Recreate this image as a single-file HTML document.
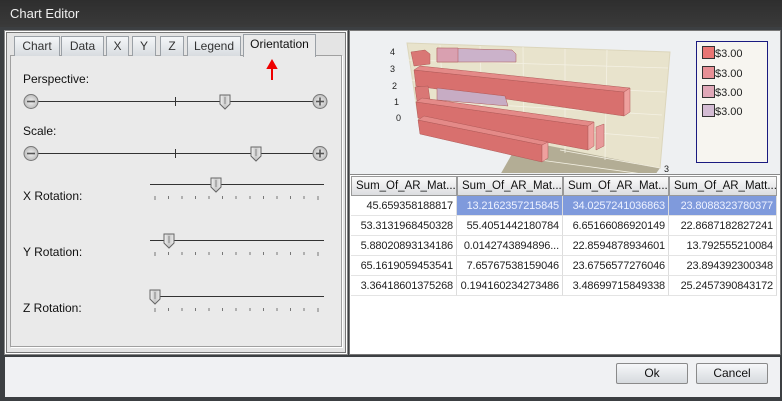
<!DOCTYPE html>
<html><head><meta charset="utf-8"><style>
*{margin:0;padding:0;box-sizing:border-box}
body{width:782px;height:401px;background:#3c3f42;font-family:"Liberation Sans",sans-serif;font-size:11px;color:#111;position:relative;overflow:hidden}
.a{position:absolute}
.title{left:0;top:0;width:782px;height:27px;background:linear-gradient(#2e2e2e,#3a3a3a);color:#f0f0f0;font-size:13px;padding:6px 10px}
.lp{left:4px;top:30px;width:344px;height:325px;background:#e4e4e4;border:1px solid #888;box-shadow:inset 0 0 0 1px #fff,inset 0 0 0 2px #777}
.tab{top:36px;height:20px;background:linear-gradient(#f4f6f8,#d8dce0);border:1px solid #9aa0a6;border-bottom:none;text-align:center;line-height:19px;font-size:12px;color:#333}
.panel{left:10px;top:55px;width:332px;height:292px;background:#eaeaea;border:1px solid #a0a0a0;box-shadow:1px 1px 0 #fff}
.lbl{font-size:12px;color:#111}
.rp{left:349px;top:30px;width:432px;height:325px;background:#eef0f2;border:1px solid #777}
.grid{left:350px;top:174px;width:430px;height:180px;background:#fff;border-top:1px solid #888}
.hd{top:176px;height:20px;background:linear-gradient(#fafafa,#dcdde0);border:1px solid #999;font-size:11.5px;line-height:18px;padding-left:4px;color:#111;white-space:nowrap;overflow:hidden}
.c{height:20px;font-size:11px;letter-spacing:-0.15px;line-height:20px;text-align:right;padding-right:3px;border-right:1px solid #ddd;border-bottom:1px solid #e4e4e4;color:#222;white-space:nowrap;overflow:hidden}
.s{background:#7f9adc;color:#eef2ff}
.bot{left:5px;top:357px;width:775px;height:40px;background:#f0f1f3}
.btn{top:363px;height:21px;border:1px solid #8a8a8a;border-radius:2px;background:linear-gradient(#f6f7f9,#d6dade);text-align:center;line-height:19px;font-size:12px}
</style></head><body>
<div class="a title">Chart Editor</div>
<div class="a lp"></div>
<div class="a panel"></div>
<div class="a tab" style="left:14px;width:46px">Chart</div>
<div class="a tab" style="left:61px;width:43px">Data</div>
<div class="a tab" style="left:106px;width:23px">X</div>
<div class="a tab" style="left:132px;width:24px">Y</div>
<div class="a tab" style="left:160px;width:24px">Z</div>
<div class="a tab" style="left:187px;width:54px">Legend</div>
<div class="a tab" style="left:243px;top:34px;width:73px;height:23px;background:#eaeaea;color:#111">Orientation</div>
<div class="a lbl" style="left:23px;top:72px">Perspective:</div>
<div class="a lbl" style="left:23px;top:124px">Scale:</div>
<div class="a lbl" style="left:23px;top:189px">X Rotation:</div>
<div class="a lbl" style="left:23px;top:245px">Y Rotation:</div>
<div class="a lbl" style="left:23px;top:301px">Z Rotation:</div>
<svg class="a" style="left:0;top:0" width="350" height="360">
<defs><linearGradient id="th" x1="0" x2="1"><stop offset="0" stop-color="#f4f4f4"/><stop offset=".5" stop-color="#c8c8c8"/><stop offset="1" stop-color="#eee"/></linearGradient>
<radialGradient id="ci"><stop offset="0" stop-color="#f2f2f2"/><stop offset="1" stop-color="#bdbdbd"/></radialGradient>
<g id="thumb"><path d="M-5,-6h10v9l-5,5l-5,-5z" fill="url(#th)" stroke="#666"/><line x1="0" y1="-4" x2="0" y2="3" stroke="#888"/></g>
<g id="mi"><circle r="7" fill="url(#ci)" stroke="#777"/><line x1="-4" x2="4" stroke="#555" stroke-width="1.6"/></g>
<g id="pl"><circle r="7" fill="url(#ci)" stroke="#777"/><line x1="-4" x2="4" stroke="#555" stroke-width="1.6"/><line y1="-4" y2="4" stroke="#555" stroke-width="1.6"/></g>
<g id="tk" stroke="#777"><line x1="155" x2="155" y1="0" y2="4"/><line x1="168.5" x2="168.5" y1="0" y2="3"/><line x1="182" x2="182" y1="0" y2="3"/><line x1="195.5" x2="195.5" y1="0" y2="3"/><line x1="209" x2="209" y1="0" y2="3"/><line x1="222.5" x2="222.5" y1="0" y2="3"/><line x1="236" x2="236" y1="0" y2="3"/><line x1="250" x2="250" y1="0" y2="3"/><line x1="263.5" x2="263.5" y1="0" y2="3"/><line x1="277" x2="277" y1="0" y2="3"/><line x1="290.5" x2="290.5" y1="0" y2="3"/><line x1="304" x2="304" y1="0" y2="3"/><line x1="318" x2="318" y1="0" y2="4"/></g></defs>
<line x1="37" x2="314" y1="101.5" y2="101.5" stroke="#333"/><line x1="175.5" x2="175.5" y1="97" y2="106" stroke="#333"/>
<use href="#mi" x="31" y="101.5"/><use href="#pl" x="320" y="101.5"/><use href="#thumb" x="225" y="101"/>
<line x1="37" x2="314" y1="153.5" y2="153.5" stroke="#333"/><line x1="175.5" x2="175.5" y1="149" y2="158" stroke="#333"/>
<use href="#mi" x="31" y="153.5"/><use href="#pl" x="320" y="153.5"/><use href="#thumb" x="256" y="153"/>
<line x1="150" x2="324" y1="184.5" y2="184.5" stroke="#333"/><use href="#tk" y="196"/><use href="#thumb" x="216" y="184"/>
<line x1="150" x2="324" y1="240.5" y2="240.5" stroke="#333"/><use href="#tk" y="252"/><use href="#thumb" x="169" y="240"/>
<line x1="150" x2="324" y1="296.5" y2="296.5" stroke="#333"/><use href="#tk" y="308"/><use href="#thumb" x="155" y="296"/>
<path d="M272,80v-14M272,61l-4,7h8z" stroke="#e00" stroke-width="2" fill="#e00"/>
</svg>
<div class="a rp"></div>
<svg class="a" style="left:350px;top:31px" width="430" height="142" viewBox="350 31 430 142">
<polygon points="407,43 670,52 660,168 420,130" fill="#e8e3cc" stroke="#dcd6bc"/>
<polygon points="520,140 660,168 655,175 500,175" fill="#b3ad95"/>
<g stroke="#f4f1e4" stroke-width=".8" fill="none"><path d="M440,45L445,135M480,46L483,140M523,47L524,147M565,49L565,153M607,50L605,160M407,60L668,68M410,80L665,92M414,100L662,115M417,118L659,138M560,150L660,168M540,160L650,175"/></g>
<g stroke="#b05a58" stroke-width=".5">
<polygon points="411,52 425,50 430,54 430,64 414,66" fill="#d97775"/>
<polygon points="437,48 512,50 516,54 516,62 437,62" fill="#cbb2ca"/>
<polygon points="437,48 458,48 458,62 437,62" fill="#d9a0b0"/>
<polygon points="414,70 624,92 624,116 416,86" fill="#d8706e"/>
<polygon points="414,70 420,66 630,88 624,92" fill="#e48a88"/>
<polygon points="624,92 630,88 630,112 624,116" fill="#eea09e"/>
<polygon points="415,87 428,86 430,100 417,101" fill="#d97775"/>
<polygon points="437,88 505,96 508,106 437,100" fill="#c7acc4"/>
<polygon points="416,102 588,126 588,150 418,118" fill="#d8706e"/>
<polygon points="416,102 422,98 594,122 588,126" fill="#e48a88"/>
<polygon points="588,126 594,122 594,146 588,150" fill="#eea09e"/>
<polygon points="596,127 604,124 604,146 596,150" fill="#e79a9a"/>
<polygon points="418,120 542,145 542,162 420,134" fill="#d8706e"/>
<polygon points="418,120 424,116 548,142 542,145" fill="#e48a88"/>
<polygon points="542,145 548,142 548,158 542,162" fill="#eea09e"/>
</g>
<g font-size="9" fill="#222"><text x="390" y="55">4</text><text x="390" y="72">3</text><text x="392" y="89">2</text><text x="394" y="105">1</text><text x="396" y="121">0</text><text x="664" y="172">3</text></g>
<rect x="696.5" y="41.5" width="71" height="121" fill="#f7f5f0" stroke="#1a1a80"/>
<g font-size="11" fill="#222"><rect x="702.5" y="46.5" width="12" height="12" fill="#e97674" stroke="#333"/><text x="715" y="57">$3.00</text>
<rect x="702.5" y="66.5" width="12" height="12" fill="#e79096" stroke="#333"/><text x="715" y="77">$3.00</text>
<rect x="702.5" y="85.5" width="12" height="12" fill="#e0a8b8" stroke="#333"/><text x="715" y="96">$3.00</text>
<rect x="702.5" y="104.5" width="12" height="12" fill="#d4bcd4" stroke="#333"/><text x="715" y="115">$3.00</text></g>
</svg>
<div class="a grid"></div>
<div class="a hd" style="left:351px;width:106px">Sum_Of_AR_Mat...</div>
<div class="a hd" style="left:457px;width:106px">Sum_Of_AR_Mat...</div>
<div class="a hd" style="left:563px;width:106px">Sum_Of_AR_Mat...</div>
<div class="a hd" style="left:669px;width:108px">Sum_Of_AR_Matt...</div>
<div class="a" style="left:351px;top:196px;width:426px;display:grid;grid-template-columns:106px 106px 106px 108px">
<div class="c">45.659358188817</div><div class="c s">13.2162357215845</div><div class="c s">34.0257241036863</div><div class="c s">23.8088323780377</div>
<div class="c">53.3131968450328</div><div class="c">55.4051442180784</div><div class="c">6.65166086920149</div><div class="c">22.8687182827241</div>
<div class="c">5.88020893134186</div><div class="c">0.0142743894896...</div><div class="c">22.8594878934601</div><div class="c">13.792555210084</div>
<div class="c">65.1619059453541</div><div class="c">7.65767538159046</div><div class="c">23.6756577276046</div><div class="c">23.894392300348</div>
<div class="c">3.36418601375268</div><div class="c">0.194160234273486</div><div class="c">3.48699715849338</div><div class="c">25.2457390843172</div>
</div>
<div class="a bot"></div>
<div class="a btn" style="left:616px;width:72px">Ok</div>
<div class="a btn" style="left:696px;width:72px">Cancel</div>
</body></html>
